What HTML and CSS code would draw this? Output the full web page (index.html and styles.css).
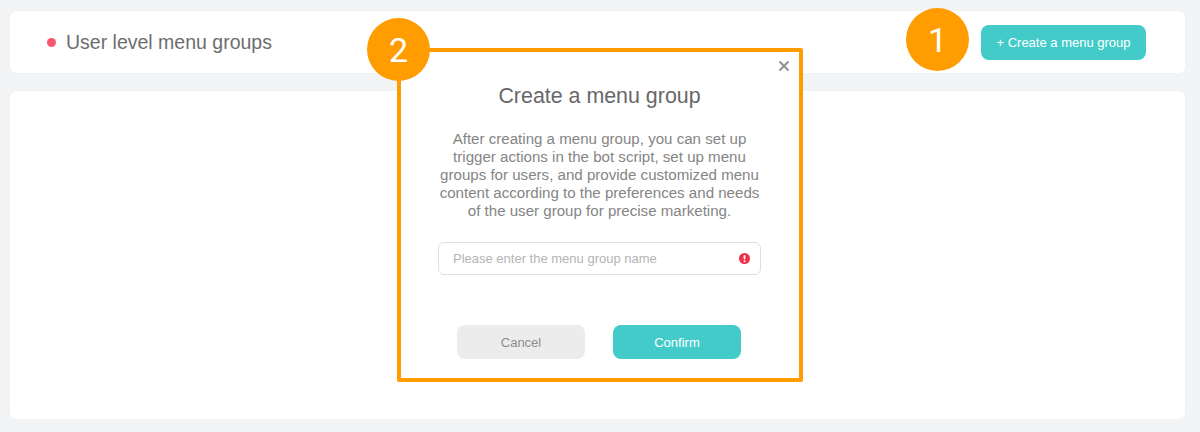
FILE: index.html
```html
<!DOCTYPE html>
<html lang="en">
<head>
    <meta charset="UTF-8">
    <title>User level menu groups</title>
    <link rel="stylesheet" href="styles.css">
</head>
<body>
    <div class="page-header">
        <div class="page-title"><span class="title-dot"></span>User level menu groups</div>
        <button class="create-button">+ Create a menu group</button>
    </div>
    <div class="page-body"></div>

    <div class="step-badge step-one">1</div>

    <div class="modal">
        <svg class="modal-close" width="12" height="12" viewBox="0 0 12 12">
            <path d="M1.5 1.5 L10.5 10.5 M10.5 1.5 L1.5 10.5" stroke="#929292" stroke-width="2" fill="none"/>
        </svg>
        <h2 class="modal-title">Create a menu group</h2>
        <p class="modal-text">
            After creating a menu group, you can set up<br>
            trigger actions in the bot script, set up menu<br>
            groups for users, and provide customized menu<br>
            content according to the preferences and needs<br>
            of the user group for precise marketing.
        </p>
        <div class="name-field">
            <span class="name-placeholder">Please enter the menu group name</span>
            <svg width="11" height="11" viewBox="0 0 11 11">
                <circle cx="5.5" cy="5.5" r="5.5" fill="#f0304a"/>
                <rect x="4.6" y="2" width="1.8" height="4.4" rx="0.8" fill="#fff"/>
                <circle cx="5.5" cy="8.2" r="1" fill="#fff"/>
            </svg>
        </div>
        <div class="modal-actions">
            <button class="modal-button cancel-button">Cancel</button>
            <button class="modal-button confirm-button">Confirm</button>
        </div>
    </div>

    <div class="step-badge step-two">2</div>
</body>
</html>
```

FILE: styles.css
```css
* {
    margin: 0;
    padding: 0;
    box-sizing: border-box;
}

body {
    font-family: 'Liberation Sans', Arial, sans-serif;
    background: #f3f4f6;
    height: 432px;
    overflow: hidden;
    padding: 11px 15px 0 10px;
}

.page-header {
    background: #fff;
    border-radius: 6px;
    box-shadow: 0 0 2px rgba(0,0,0,0.04);
    height: 62px;
    display: flex;
    align-items: center;
    justify-content: space-between;
    padding: 0 39px 0 37px;
}

.page-title {
    display: flex;
    align-items: center;
    color: #6d6d6f;
    font-size: 19.5px;
}

.title-dot {
    width: 9px;
    height: 9px;
    border-radius: 50%;
    background: #f8566f;
    margin-right: 10px;
}

.create-button {
    width: 165px;
    height: 35px;
    background: #43cbca;
    color: #fff;
    border: none;
    border-radius: 8px;
    font-family: inherit;
    font-size: 13px;
}

.page-body {
    background: #fff;
    border-radius: 6px;
    box-shadow: 0 0 2px rgba(0,0,0,0.04);
    height: 328px;
    margin-top: 18px;
}

.step-badge {
    position: absolute;
    width: 63px;
    height: 63px;
    border-radius: 50%;
    background: #ff9c00;
    color: #fff;
    font-family: Roboto, sans-serif;
    font-size: 34px;
    font-weight: 400;
    display: flex;
    align-items: center;
    justify-content: center;
}

.step-one {
    left: 906px;
    top: 8px;
}

.step-two {
    left: 367px;
    top: 18px;
}

.modal {
    position: absolute;
    left: 397px;
    top: 48px;
    width: 406px;
    height: 334px;
    background: #fff;
    border: 4px solid #ff9c00;
    border-radius: 2px;
    display: flex;
    flex-direction: column;
    align-items: center;
    padding-right: 1px;
}

.modal-close {
    position: absolute;
    right: 9px;
    top: 8px;
}

.modal-title {
    color: #67676a;
    font-size: 21.4px;
    font-weight: 400;
    line-height: 26px;
    margin-top: 31px;
}

.modal-text {
    color: #858585;
    font-size: 15.1px;
    line-height: 18px;
    text-align: center;
    margin-top: 21px;
}

.name-field {
    width: 323px;
    height: 33px;
    border: 1px solid #dedede;
    border-radius: 6px;
    display: flex;
    align-items: center;
    justify-content: space-between;
    padding: 0 10px 0 14px;
    margin-top: 22px;
}

.name-placeholder {
    color: #b4b4b4;
    font-size: 13px;
}

.modal-actions {
    display: flex;
    gap: 28px;
    margin-top: 50px;
    margin-right: 1px;
}

.modal-button {
    width: 128px;
    height: 34px;
    border: none;
    border-radius: 8px;
    font-family: inherit;
    font-size: 13px;
}

.cancel-button {
    background: #ececec;
    color: #8c8c8c;
}

.confirm-button {
    background: #43cbca;
    color: #fff;
}
```
